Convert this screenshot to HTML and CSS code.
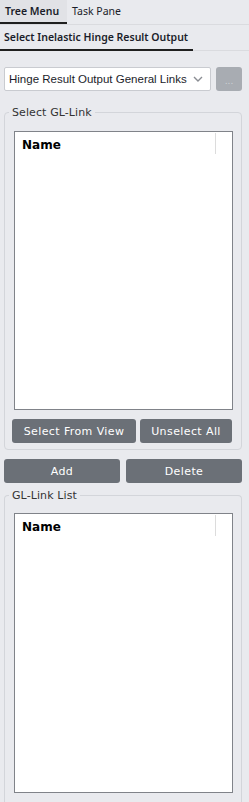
FILE: index.html
```html
<!DOCTYPE html>
<html>
  <head>
    <meta charset="utf-8" />
    <link rel="stylesheet" href="styles.css">
  </head>
  <body>
    <div class="pane">
      <div class="tabs">
        <div class="tab active">Tree Menu</div>
        <div class="tab">Task Pane</div>
      </div>
      <div class="subtabs">
        <div class="subtab">Select Inelastic Hinge Result Output</div>
      </div>
      <div class="body">
        <div class="combo-row">
          <div class="combo">
            <span>Hinge Result Output General Links</span>
            <svg width="10" height="6" viewBox="0 0 10 6">
              <path d="M1 1 L5 5 L9 1" fill="none" stroke="#8a8d93" stroke-width="1.4" />
            </svg>
          </div>
          <div class="more">...</div>
        </div>

        <fieldset class="group first">
          <legend>Select GL-Link</legend>
          <div class="list">
            <div class="list-head">
              <div class="col">Name</div>
            </div>
          </div>
          <div class="btn-row">
            <button class="btn wide">Select From View</button>
            <button class="btn">Unselect All</button>
          </div>
        </fieldset>

        <div class="actions">
          <button class="btn">Add</button>
          <button class="btn">Delete</button>
        </div>

        <fieldset class="group last">
          <legend>GL-Link List</legend>
          <div class="list tall">
            <div class="list-head">
              <div class="col">Name</div>
            </div>
          </div>
        </fieldset>
      </div>
    </div>
  </body>
</html>
```

FILE: styles.css
```css
html,
body {
  margin: 0;
  padding: 0;
  height: 802px;
  overflow: hidden;
  background: #e9eaee;
}
.pane {
  width: 249px;
  font-family: "DejaVu Sans", sans-serif;
  font-size: 11px;
  color: #222;
}
.tabs {
  display: flex;
  height: 24px;
  border-bottom: 1px solid #dadbdf;
  font-family: "Noto Sans", sans-serif;
  font-size: 10.5px;
  color: #1b1d2a;
}
.tab {
  padding: 0 7px 0 5px;
  line-height: 22px;
}
.tab.active {
  background: #e1e2e6;
  font-weight: 600;
  border-bottom: 2px solid #1f1f1f;
  padding-right: 8px;
}
.subtabs {
  height: 25px;
  border-bottom: 1px solid #dadbdf;
  display: flex;
}
.subtab {
  font-family: "Noto Sans", sans-serif;
  font-size: 10.5px;
  font-weight: 600;
  color: #1b1d2a;
  padding: 0 5px 0 4px;
  line-height: 24px;
  border-bottom: 2px solid #1f1f1f;
  margin-bottom: -1px;
}
.body {
  padding: 16px 7px 0 4px;
}
.combo-row {
  display: flex;
  gap: 5px;
}
.combo {
  flex: 1;
  height: 22px;
  background: #fff;
  border: 1px solid #c9cbd0;
  border-radius: 2px;
  display: flex;
  align-items: center;
  justify-content: space-between;
  padding: 0 7px 0 4px;
  font-family: "Liberation Sans", sans-serif;
  font-size: 11.5px;
  color: #1b1d2a;
}
.more {
  width: 26px;
  height: 24px;
  background: #a8acb2;
  border-radius: 3px;
  color: #cfd2d6;
  font-size: 9px;
  text-align: center;
  line-height: 28px;
}
.group {
  margin: 15px 0 0 0;
  padding: 12px 8px 6px 9px;
  border: 1px solid #d3d5da;
  border-radius: 4px;
  width: 238px;
  box-sizing: border-box;
}
.group legend {
  padding: 0 3px;
  margin-left: -5px;
  color: #333;
  letter-spacing: 0.1px;
}
.group.last {
  margin-top: 6px;
  padding-top: 11px;
  height: 330px;
  border-bottom: none;
  border-radius: 4px 4px 0 0;
}
.list {
  background: #fff;
  border: 1px solid #808389;
  height: 277px;
}
.list.tall {
  height: 278px;
}
.list-head {
  display: flex;
  height: 21px;
  padding-top: 1px;
}
.col {
  flex: 1;
  font-weight: bold;
  font-size: 12px;
  color: #000;
  padding-left: 7px;
  line-height: 24px;
  margin-right: 16px;
  border-right: 1px solid #dcdcdc;
}
.btn-row {
  display: flex;
  gap: 4px;
  margin: 9px 0 0 -2px;
}
.btn {
  height: 24px;
  border: none;
  border-radius: 3px;
  background: #6b7077;
  color: #fff;
  font-family: "DejaVu Sans", sans-serif;
  font-size: 11px;
  letter-spacing: 0.4px;
  padding: 0;
}
.btn-row .btn {
  flex: 0 0 92px;
}
.btn-row .btn.wide {
  flex: 0 0 124px;
}
.actions {
  display: flex;
  gap: 6px;
  margin-top: 9px;
}
.actions .btn {
  flex: 0 0 116px;
}
```
